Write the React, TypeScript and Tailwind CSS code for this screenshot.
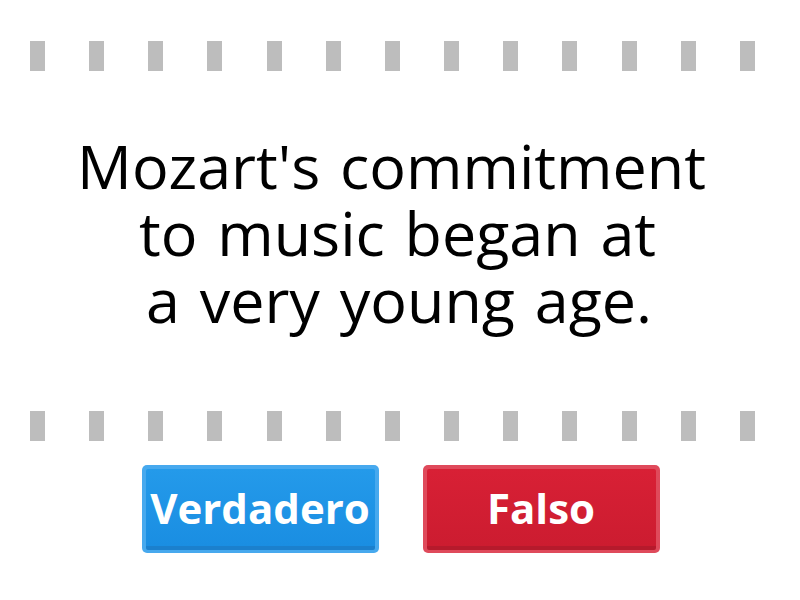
import React from "react";

const Row = () => (
  <div className="flex justify-between px-[30px] w-[785px]">
    {Array.from({ length: 13 }).map((_, i) => (
      <div key={i} className="w-[15px] h-[30px] bg-[#bdbdbd]" />
    ))}
  </div>
);

export default function App() {
  return (
    <div
      className="w-[800px] h-[600px] bg-white flex flex-col items-stretch"
      style={{ fontFamily: '"Open Sans", sans-serif' }}
    >
      <div className="pt-[41px]">
        <Row />
      </div>
      <div className="flex flex-col items-center mt-[61px] text-[61px] leading-[67px] text-black [word-spacing:4px] text-center">
        <div className="-ml-[17px]">Mozart's commitment</div>
        <div className="-ml-[5px]">to music began at</div>
        <div className="-ml-[2px]">a very young age.</div>
      </div>
      <div className="mt-[78px]">
        <Row />
      </div>
      <div className="flex justify-center gap-[44px] mt-[24px] pl-[1px]">
        <div className="w-[237px] h-[88px] shrink-0 rounded-[5px] bg-[#47a9ee] px-[4px] pt-[4px] pb-[3px] flex">
          <div className="flex-1 rounded-[2px] bg-gradient-to-b from-[#249aea] to-[#1a8ee2] border-b-[4px] border-[#1b80cd] flex items-center justify-center text-white font-bold text-[42px]">
            Verdadero
          </div>
        </div>
        <div className="w-[237px] h-[88px] shrink-0 rounded-[5px] bg-[#df4a5b] px-[4px] pt-[4px] pb-[3px] flex">
          <div className="flex-1 rounded-[2px] bg-gradient-to-b from-[#d82035] to-[#cc1c30] border-b-[4px] border-[#b61a2c] flex items-center justify-center text-white font-bold text-[42px]">
            Falso
          </div>
        </div>
      </div>
    </div>
  );
}
